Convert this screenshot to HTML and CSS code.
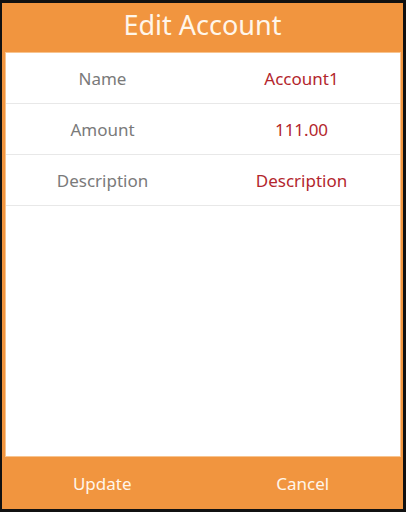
FILE: index.html
```html
<!DOCTYPE html>
<html>
<head>
<meta charset="utf-8">
<link rel="stylesheet" href="styles.css">
</head>
<body>
<div class="dialog">
  <div class="title">Edit Account</div>
  <div class="panel">
    <div class="row"><span class="label">Name</span><span class="value">Account1</span></div>
    <div class="row"><span class="label">Amount</span><span class="value">111.00</span></div>
    <div class="row"><span class="label">Description</span><span class="value">Description</span></div>
  </div>
  <div class="buttons">
    <span class="btn">Update</span>
    <span class="btn">Cancel</span>
  </div>
</div>
</body>
</html>
```

FILE: styles.css
```css
html, body {
  margin: 0;
  padding: 0;
  background: #111;
  width: 406px;
  height: 512px;
  overflow: hidden;
}
.dialog {
  margin: 3px 3px 0 2px;
  height: 506px;
  background: #f1953f;
  display: flex;
  flex-direction: column;
  font-family: "Noto Sans", "Open Sans", sans-serif;
}
.title {
  height: 50px;
  display: flex;
  align-items: center;
  justify-content: center;
  color: #fff6ea;
  font-size: 27px;
  padding-bottom: 8px;
  box-sizing: border-box;
}
.panel {
  margin: 0 3px 0 4px;
  background: #fff;
  height: 403px;
  box-shadow: 0 0 0 1px #f8c48f;
}
.row {
  height: 50px;
  border-bottom: 1px solid #e8e8e8;
  display: grid;
  grid-template-columns: 1fr 1fr;
  align-items: center;
  font-size: 17px;
}
.label {
  text-align: center;
  color: #7a7a7a;
  padding-right: 4px;
}
.value {
  text-align: center;
  color: #b3262d;
}
.buttons {
  flex: 1;
  display: grid;
  grid-template-columns: 1fr 1fr;
  align-items: center;
  color: #fff6ea;
  font-size: 17px;
  padding-top: 2px;
}
.btn {
  text-align: center;
}
```
